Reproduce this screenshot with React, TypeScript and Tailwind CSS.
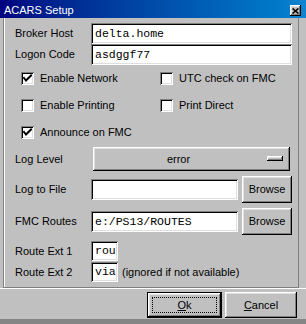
import React from "react";

const raised =
  "shadow-[inset_-1px_-1px_#000,inset_1px_1px_#fff,inset_-2px_-2px_#808080,inset_2px_2px_#dfdfdf]";
const sunken =
  "shadow-[inset_1px_1px_#808080,inset_-1px_-1px_#fff,inset_2px_2px_#000,inset_-2px_-2px_#dfdfdf]";

function Field({ value, className = "" }: { value: string; className?: string }) {
    return (
        <div className={`bg-white h-[21px] flex items-center pl-[4px] ${sunken} ${className}`}>
            <span className="font-['Liberation_Mono',monospace] text-[11.5px] leading-none text-black whitespace-nowrap overflow-hidden">
                {value}
            </span>
        </div>
    );
}

function Check({ label, checked }: { label: string; checked?: boolean }) {
    return (
        <div className="flex items-center">
            <div className={`w-[13px] h-[13px] bg-white ${sunken} flex items-center justify-center`}>
                {checked && (
                    <svg width="9" height="9" viewBox="0 0 9 9">
                        <path d="M1 4 L3 6.5 L8 1.5" fill="none" stroke="#000" strokeWidth="2" strokeLinecap="square" />
                    </svg>
                )}
            </div>
            <span className="ml-[6px]">{label}</span>
        </div>
    );
}

function Button({ children, className = "" }: { children: React.ReactNode; className?: string }) {
    return (
        <div className={`bg-[#c0c0c0] ${raised} flex items-center justify-center ${className}`}>
            {children}
        </div>
    );
}

export default function App() {
    return (
        <div className="w-[306px] h-[324px] bg-[#c0c0c0] flex flex-col overflow-hidden font-['Liberation_Sans',Arial,sans-serif] text-[11px] text-black">
            {/* title bar */}
            <div className="h-[18px] shrink-0 flex justify-between bg-gradient-to-r from-[#000080] to-[#1084d0] pl-[4px] pr-[5px]">
                <span className="text-white pt-[4px] leading-[12px]">ACARS Setup</span>
                <div className={`mt-[5px] w-[11px] h-[11px] bg-[#c0c0c0] ${raised} flex items-center justify-center`}>
                    <svg width="7" height="6" viewBox="0 0 7 6">
                        <path d="M0.5 0.5 L6.5 5.5 M6.5 0.5 L0.5 5.5" stroke="#000" strokeWidth="1.6" />
                    </svg>
                </div>
            </div>

            {/* main panel */}
            <div className="ml-[3px] w-[296px] h-[270px] shrink-0 border-l border-r border-b border-[#808080] shadow-[inset_1px_0_#fff] pl-[11px] pr-[6px] pt-[5px] flex flex-col">
                <div className="flex items-center h-[21px]">
                    <span className="w-[76px]">Broker Host</span>
                    <Field value="delta.home" className="flex-1" />
                </div>
                <div className="flex items-center h-[21px]">
                    <span className="w-[76px]">Logon Code</span>
                    <Field value="asdggf77" className="flex-1" />
                </div>

                <div className="grid grid-cols-[139px_1fr] pl-[6px]">
                    <div className="h-[27px] flex items-center"><Check label="Enable Network" checked /></div>
                    <div className="h-[27px] flex items-center"><Check label="UTC check on FMC" /></div>
                    <div className="h-[27px] flex items-center"><Check label="Enable Printing" /></div>
                    <div className="h-[27px] flex items-center"><Check label="Print Direct" /></div>
                    <div className="h-[27px] flex items-center"><Check label="Announce on FMC" checked /></div>
                </div>

                <div className="flex items-center h-[24px] mt-[1px]">
                    <span className="w-[78px]">Log Level</span>
                    <Button className="w-[197px] h-[24px] relative">
                        <span className="mr-[26px]">error</span>
                        <div className={`absolute right-[7px] top-[9px] w-[16px] h-[5px] ${raised}`} />
                    </Button>
                </div>

                <div className="flex items-center h-[27px] mt-[5px]">
                    <span className="w-[76px]">Log to File</span>
                    <Field value="" className="w-[147px]" />
                    <Button className="ml-[4px] w-[50px] h-[27px]">Browse</Button>
                </div>

                <div className="flex items-center h-[27px] mt-[5px]">
                    <span className="w-[76px]">FMC Routes</span>
                    <Field value="e:/PS13/ROUTES" className="w-[147px]" />
                    <Button className="ml-[4px] w-[50px] h-[27px]">Browse</Button>
                </div>

                <div className="flex items-center h-[20px] mt-[6px]">
                    <span className="w-[76px]">Route Ext 1</span>
                    <Field value="rou" className="w-[27px] !h-[20px] pl-[3px]" />
                </div>
                <div className="flex items-center h-[20px] mt-[1px]">
                    <span className="w-[76px]">Route Ext 2</span>
                    <Field value="via" className="w-[27px] !h-[20px] pl-[3px]" />
                    <span className="ml-[4px]">(ignored if not available)</span>
                </div>
            </div>

            {/* buttons */}
            <div className="h-[31px] shrink-0 border-t border-white flex justify-end gap-[3px] pr-[9px] pt-[3px]">
                <div className="w-[75px] h-[26px] border border-black">
                    <Button className="w-full h-full">
                        <div className="border border-dotted border-black w-[calc(100%-8px)] h-[calc(100%-8px)] flex items-center justify-center">
                            <span><span className="underline">O</span>k</span>
                        </div>
                    </Button>
                </div>
                <Button className="w-[72px] h-[26px]">
                    <span><span className="underline">C</span>ancel</span>
                </Button>
            </div>

            <div className="h-[5px] shrink-0 bg-[#858585]" />
        </div>
    );
}
